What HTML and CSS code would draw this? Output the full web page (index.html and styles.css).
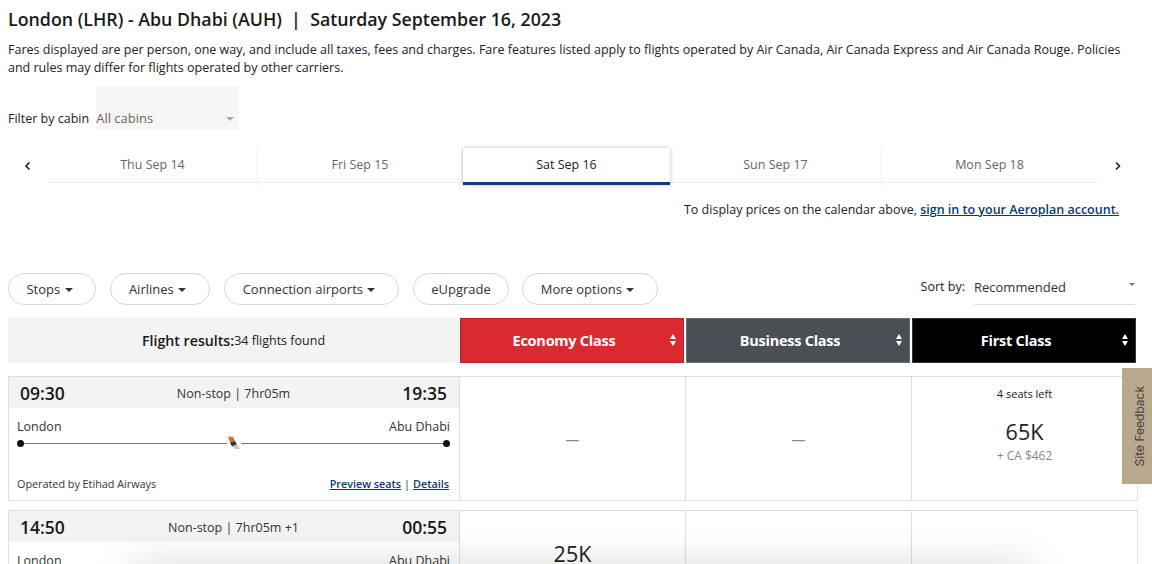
FILE: index.html
```html
<!DOCTYPE html>
<html lang="en">
<head>
    <meta charset="UTF-8">
    <meta name="viewport" content="width=device-width, initial-scale=1.0">
    <title>Flight results</title>
    <link rel="stylesheet" href="styles.css">
</head>
<body>

<h1 class="page-title">London (LHR) - Abu Dhabi (AUH) &nbsp;|&nbsp; Saturday September 16, 2023</h1>
<p class="fare-note">Fares displayed are per person, one way, and include all taxes, fees and charges. Fare features listed apply to flights operated by Air Canada, Air Canada Express and Air Canada Rouge. Policies and rules may differ for flights operated by other carriers.</p>

<div class="cabin-filter">
    <span class="cabin-label">Filter by cabin</span>
    <div class="cabin-select">
        <span>All cabins</span>
        <i class="caret caret-grey"></i>
    </div>
</div>

<div class="date-bar">
    <svg class="date-arrow" width="40" height="16" viewBox="0 0 40 16"><path d="M21.500 4.500 L18 8 L21.500 11.500" fill="none" stroke="#222" stroke-width="1.600"/></svg>
    <div class="date-tabs">
        <div class="date-tab">Thu Sep 14</div>
        <div class="date-tab">Fri Sep 15</div>
        <div class="date-tab active">Sat Sep 16</div>
        <div class="date-tab">Sun Sep 17</div>
        <div class="date-tab">Mon Sep 18</div>
    </div>
    <svg class="date-arrow" width="40" height="16" viewBox="0 0 40 16"><path d="M19 4.500 L22.500 8 L19 11.500" fill="none" stroke="#222" stroke-width="1.600"/></svg>
</div>

<p class="signin-note">To display prices on the calendar above, <a href="#">sign in to your Aeroplan account.</a></p>

<div class="filter-row">
    <button class="pill pill-stops">Stops <i class="caret"></i></button>
    <button class="pill pill-airlines">Airlines <i class="caret"></i></button>
    <button class="pill pill-airports">Connection airports <i class="caret"></i></button>
    <button class="pill pill-upgrade">eUpgrade</button>
    <button class="pill pill-more">More options <i class="caret"></i></button>
    <div class="sort">
        <span class="sort-label">Sort by:</span>
        <div class="sort-select">
            <span>Recommended</span>
            <i class="caret caret-small"></i>
        </div>
    </div>
</div>

<div class="results-head">
    <div class="results-count"><strong>Flight results:</strong>34 flights found</div>
    <div class="cabin-head economy">Economy Class<span class="sorter"></span></div>
    <div class="cabin-head business">Business Class<span class="sorter"></span></div>
    <div class="cabin-head first">First Class<span class="sorter"></span></div>
</div>

<div class="flight">
    <div class="flight-info">
        <div class="flight-times">
            <span class="time">09:30</span>
            <span class="duration">Non-stop | 7hr05m</span>
            <span class="time">19:35</span>
        </div>
        <div class="flight-cities"><span>London</span><span>Abu Dhabi</span></div>
        <div class="flight-line">
            <i class="dot"></i>
            <i class="line"></i>
            <svg class="tail" width="14" height="14" viewBox="0 0 14 14">
                <path d="M1 0.500 L6 1 L8 5 L3 6.500 Z" fill="#c8762a"/>
                <path d="M3 6.500 L8 5 L10 8.500 L5 10.500 Z" fill="#3c332c"/>
                <path d="M5 10.500 L10 8.500 L13.500 13 L8 13 Z" fill="#cfc9bd"/>
            </svg>
            <i class="line"></i>
            <i class="dot"></i>
        </div>
        <div class="flight-foot">
            <span>Operated by Etihad Airways</span>
            <span class="flight-links"><a href="#">Preview seats</a><span class="link-sep">|</span><a href="#">Details</a></span>
        </div>
    </div>
    <div class="fare fare-none">—</div>
    <div class="fare fare-none">—</div>
    <div class="fare">
        <div class="seats-left">4 seats left</div>
        <div class="points">65K</div>
        <div class="cash">+ CA $462</div>
    </div>
</div>

<div class="flight flight-cut">
    <div class="flight-info">
        <div class="flight-times">
            <span class="time">14:50</span>
            <span class="duration">Non-stop | 7hr05m +1</span>
            <span class="time">00:55</span>
        </div>
        <div class="flight-cities"><span>London</span><span>Abu Dhabi</span></div>
    </div>
    <div class="fare fare-low"><div class="points">25K</div></div>
    <div class="fare"></div>
    <div class="fare"></div>
</div>

<div class="site-feedback"><span>Site Feedback</span></div>
<div class="bottom-shadow"></div>

</body>
</html>
```

FILE: styles.css
```css
html, body {
    height: 100%;
    overflow: hidden;
}

body {
    font-family: 'Open Sans', sans-serif;
    margin: 0;
    padding: 0 15px 0 8px;
    background-color: #fff;
    color: #222;
    font-size: 12.5px;
    position: relative;
}

.page-title {
    font-size: 17.8px;
    font-weight: 600;
    line-height: 24px;
    margin: 0;
    padding-top: 7px;
    color: #1a1a1a;
}

.fare-note {
    margin: 10px 0 0;
    line-height: 18px;
    width: 1120px;
}

.cabin-filter {
    display: flex;
    align-items: flex-end;
    margin-top: 9px;
    height: 44px;
}

.cabin-label {
    margin-right: 7px;
    line-height: 18px;
    padding-bottom: 2px;
}

.cabin-select {
    width: 142px;
    height: 44px;
    background-color: #f7f6f4;
    color: #666;
    font-size: 13px;
    display: flex;
    justify-content: space-between;
    align-items: flex-end;
    line-height: 18px;
    padding-bottom: 3px;
    box-sizing: border-box;
}

.cabin-select .caret {
    margin: 0 4px 6px 0;
}

.caret {
    display: inline-block;
    width: 0;
    height: 0;
    border-left: 4px solid transparent;
    border-right: 4px solid transparent;
    border-top: 4px solid #333;
    margin-left: 1px;
    vertical-align: 2px;
}

.pill .caret {
    margin-right: 5px;
}

.caret-grey {
    border-top-color: #aaa;
}

.caret-small {
    border-left-width: 3px;
    border-right-width: 3px;
    border-top-width: 3px;
    border-top-color: #777;
    margin-bottom: 6px;
}

.date-bar {
    display: flex;
    align-items: center;
    margin-top: 18px;
    width: 1129px;
}

.date-arrow {
    flex: 0 0 40px;
}

.date-tabs {
    flex: 1;
    display: grid;
    grid-template-columns: 210px 205px 207px 212px 215px;
    border-bottom: 1px solid #eee;
    height: 34px;
}

.date-tab {
    color: #666;
    display: flex;
    align-items: center;
    justify-content: center;
    border-right: 1px solid #eee;
    padding-bottom: 5px;
    box-sizing: border-box;
}

.date-tab:last-child {
    border-right: none;
}

.date-tab.active {
    color: #222;
    background-color: #fff;
    border-right: none;
    border-bottom: 3px solid #0a3f7c;
    height: 37px;
    padding-bottom: 1px;
    box-shadow: 0 0 4px rgba(0, 0, 0, 0.25);
    position: relative;
}

.signin-note {
    margin: 17px 0 0;
    line-height: 20px;
    text-align: right;
    padding-right: 18px;
}

.signin-note a, .flight-links a {
    color: #0a3a70;
    font-weight: 600;
    text-decoration: underline;
}

.filter-row {
    display: flex;
    align-items: center;
    margin-top: 53px;
}

.pill {
    font-family: inherit;
    font-size: 13px;
    font-weight: 500;
    color: #333;
    height: 32px;
    padding: 0;
    margin-right: 14px;
    background-color: #fff;
    border: 1px solid #d8d8d8;
    border-radius: 16px;
}

.pill-stops {
    width: 88px;
}

.pill-airlines {
    width: 100px;
}

.pill-airports {
    width: 175px;
}

.pill-upgrade {
    width: 96px;
    margin-right: 13px;
}

.pill-more {
    width: 136px;
}

.sort {
    margin-left: auto;
    display: flex;
    align-items: flex-start;
    margin-right: 2px;
}

.sort-label {
    margin: 5px 9px 0 0;
    line-height: 18px;
}

.sort-select {
    width: 161px;
    height: 32px;
    box-sizing: border-box;
    display: flex;
    justify-content: space-between;
    align-items: center;
    padding-bottom: 3px;
    border-bottom: 1px solid #ddd;
    font-size: 13px;
    font-weight: 500;
    color: #333;
}

.results-head {
    display: grid;
    grid-template-columns: 452px 226px 226px 224px;
    width: 1128px;
    margin-top: 13px;
    height: 45px;
}

.results-count {
    background-color: #f3f3f3;
    margin-right: 1px;
    display: flex;
    align-items: center;
    justify-content: center;
}

.results-count strong {
    font-size: 14.2px;
    font-weight: 600;
    color: #1a1a1a;
}

.cabin-head {
    color: #fff;
    font-size: 14.5px;
    letter-spacing: -0.25px;
    font-weight: 700;
    display: flex;
    align-items: center;
    justify-content: center;
    position: relative;
    margin-right: 2px;
    padding-right: 16px;
    box-sizing: border-box;
}

.cabin-head:last-child {
    margin-right: 0;
}

.economy {
    background-color: #d92a30;
    border: 1px solid #c01f25;
}

.business {
    background-color: #4a4f55;
    border: 1px solid #6a6e74;
}

.first {
    background-color: #000;
    border: 1px solid #333;
}

.sorter {
    position: absolute;
    right: 7px;
    top: 50%;
    margin-top: -7px;
    width: 0;
    height: 0;
    border-left: 3px solid transparent;
    border-right: 3px solid transparent;
    border-bottom: 5px solid #fff;
}

.sorter::after {
    content: "";
    position: absolute;
    left: -3px;
    top: 7px;
    border-left: 3px solid transparent;
    border-right: 3px solid transparent;
    border-top: 5px solid #fff;
}

.flight {
    display: grid;
    grid-template-columns: 451px 226px 226px 225px;
    width: 1130px;
    margin-top: 13px;
    height: 125px;
    border: 1px solid #ddd;
    box-sizing: border-box;
}

.flight-cut {
    margin-top: 9px;
    height: 200px;
}

.flight-info {
    border-right: 1px solid #ddd;
    display: flex;
    flex-direction: column;
}

.flight-times {
    background-color: #f3f3f3;
    height: 31px;
    display: flex;
    align-items: center;
    justify-content: space-between;
    padding: 0 12px 0 11px;
}

.time {
    font-size: 17.5px;
    font-weight: 600;
    color: #1a1a1a;
}

.duration {
    color: #333;
    padding-top: 1px;
}

.flight-cities {
    display: flex;
    justify-content: space-between;
    padding: 10px 9px 0 8px;
    line-height: 18px;
    color: #333;
}

.flight-line {
    display: flex;
    align-items: center;
    padding: 0 9px 0 8px;
    height: 14px;
}

.dot {
    width: 7px;
    height: 7px;
    border-radius: 50%;
    background-color: #111;
    flex: none;
}

.line {
    flex: 1;
    height: 1px;
    background-color: #777;
}

.tail {
    flex: none;
}

.flight-foot {
    margin-top: auto;
    display: flex;
    justify-content: space-between;
    padding: 0 10px 8px 8px;
    font-size: 10.8px;
    line-height: 16px;
    color: #333;
}

.link-sep {
    margin: 0 3px;
}

.fare {
    border-right: 1px solid #ddd;
    text-align: center;
    color: #222;
}

.fare:last-child {
    border-right: none;
}

.fare-none {
    color: #888;
    font-size: 14px;
    padding-top: 1px;
    display: flex;
    align-items: center;
    justify-content: center;
}

.seats-left {
    font-size: 11px;
    line-height: 16px;
    margin-top: 9px;
}

.points {
    font-size: 21.5px;
    line-height: 28px;
    margin-top: 16px;
}

.cash {
    font-size: 12px;
    line-height: 16px;
    margin-top: 2px;
    color: #888;
}

.fare-low .points {
    margin-top: 29px;
}

.site-feedback {
    position: absolute;
    right: 0;
    top: 368px;
    width: 30px;
    height: 116px;
    padding-left: 5px;
    box-sizing: border-box;
    background-color: #b9a88c;
    display: flex;
    align-items: center;
    justify-content: center;
}

.site-feedback span {
    writing-mode: vertical-rl;
    transform: rotate(180deg);
    font-family: 'Inter', sans-serif;
    font-size: 12px;
    color: #444;
}

.bottom-shadow {
    position: absolute;
    left: 130px;
    right: 120px;
    bottom: -40px;
    height: 40px;
    box-shadow: 0 0 40px rgba(0, 0, 0, 0.14);
}
```
